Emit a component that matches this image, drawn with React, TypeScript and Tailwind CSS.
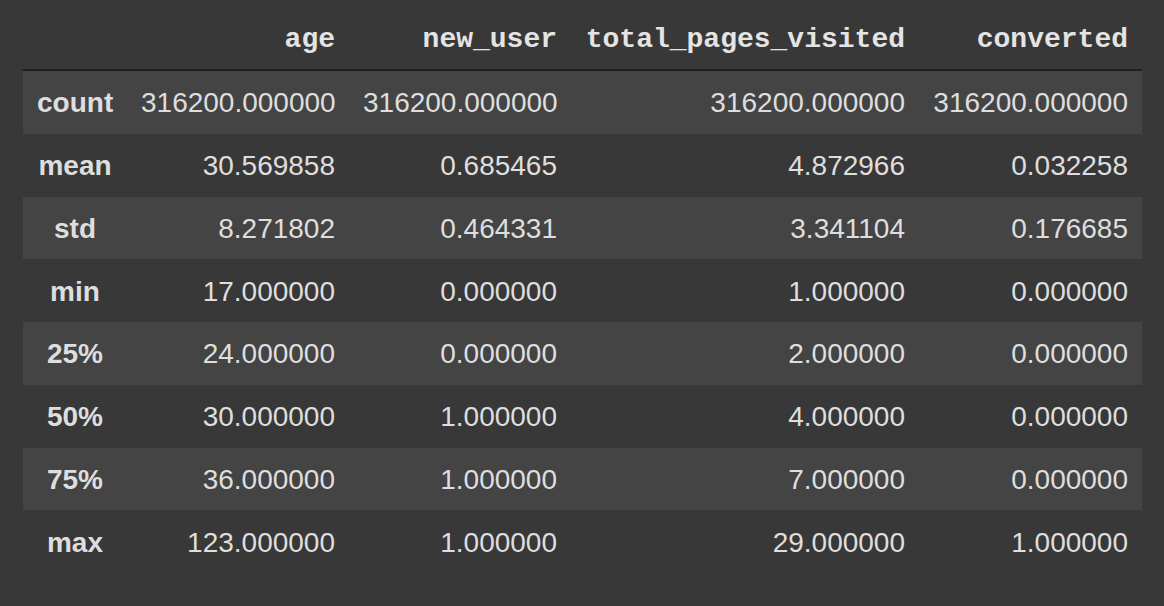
import React from "react";

const cols = ["age", "new_user", "total_pages_visited", "converted"];
const widths = ["w-[104px]", "w-[222px]", "w-[222px]", "w-[348px]", "w-[223px]"];
const rows: [string, string[]][] = [
  ["count", ["316200.000000", "316200.000000", "316200.000000", "316200.000000"]],
  ["mean", ["30.569858", "0.685465", "4.872966", "0.032258"]],
  ["std", ["8.271802", "0.464331", "3.341104", "0.176685"]],
  ["min", ["17.000000", "0.000000", "1.000000", "0.000000"]],
  ["25%", ["24.000000", "0.000000", "2.000000", "0.000000"]],
  ["50%", ["30.000000", "1.000000", "4.000000", "0.000000"]],
  ["75%", ["36.000000", "1.000000", "7.000000", "0.000000"]],
  ["max", ["123.000000", "1.000000", "29.000000", "1.000000"]],
];

export default function App() {
  return (
    <div className="w-[1164px] h-[606px] bg-[#383838] pl-[23px] text-[#dedede] overflow-hidden">
      <div className="w-[1119px] flex flex-col">
        <div
          className="flex h-[71px] border-b-2 border-[#1e1e1e] items-center pt-[10px] text-[#e4e4e4]"
          style={{ fontFamily: '"Liberation Mono", "Courier New", monospace' }}
        >
          <div className={widths[0]} />
          {cols.map((c, i) => (
            <div key={c} className={`${widths[i + 1]} text-right px-[14px] font-bold text-[28px] leading-none`}>
              {c}
            </div>
          ))}
        </div>
        <div style={{ fontFamily: '"Liberation Sans", Arial, sans-serif' }}>
          {rows.map(([label, vals], i) => (
            <div
              key={label}
              className={`flex items-center pt-[2px] h-[62.75px] ${i % 2 === 0 ? "bg-[#444444]" : "bg-[#383838]"}`}
            >
              <div className={`${widths[0]} text-center font-bold text-[28px] leading-none px-[14px]`}>{label}</div>
              {vals.map((v, j) => (
                <div key={j} className={`${widths[j + 1]} text-right text-[28px] leading-none px-[14px]`}>
                  {v}
                </div>
              ))}
            </div>
          ))}
        </div>
      </div>
    </div>
  );
}
